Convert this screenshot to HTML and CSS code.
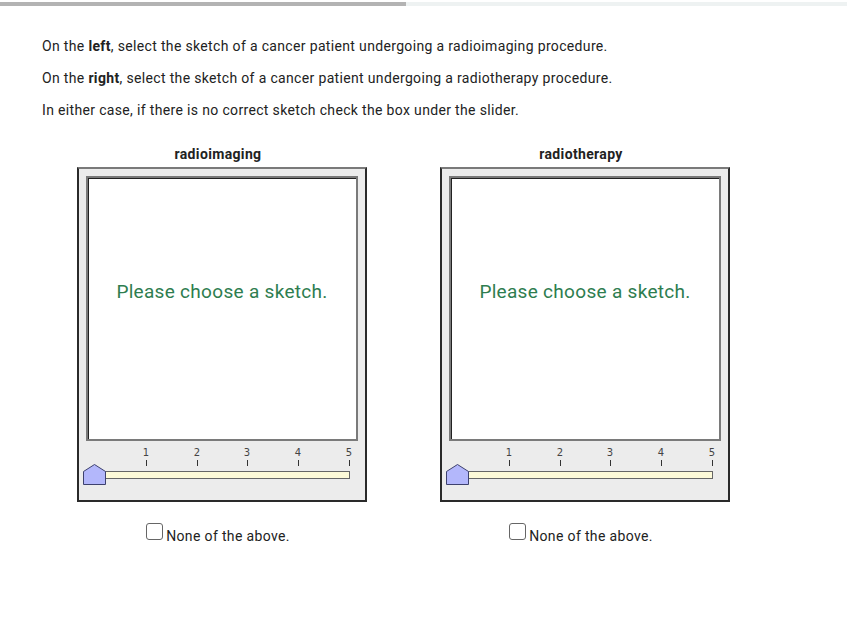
FILE: index.html
```html
<!DOCTYPE html>
<html lang="en">
<head>
    <meta charset="UTF-8">
    <meta name="viewport" content="width=device-width, initial-scale=1.0">
    <title>Sketch choice</title>
    <link rel="stylesheet" href="styles.css">
</head>
<body>
    <div class="progress">
        <div class="progressDone"></div>
    </div>

    <section class="istruzioni">
        <p>On the <b>left</b>, select the sketch of a cancer patient undergoing a radioimaging procedure.</p>
        <p>On the <b>right</b>, select the sketch of a cancer patient undergoing a radiotherapy procedure.</p>
        <p>In either case, if there is no correct sketch check the box under the slider.</p>
    </section>

    <main class="colonne">
        <div class="colonna">
            <h2 class="titolo">radioimaging</h2>
            <div class="pannello">
                <div class="schizzo">Please choose a sketch.</div>
                <svg class="slider" width="272" height="56" viewBox="0 0 272 56">
                    <g class="numeri">
                        <text x="63" y="15">1</text>
                        <text x="114" y="15">2</text>
                        <text x="164" y="15">3</text>
                        <text x="215" y="15">4</text>
                        <text x="266" y="15">5</text>
                    </g>
                    <g class="tacche">
                        <line x1="63.5" y1="19" x2="63.5" y2="25"/>
                        <line x1="114.5" y1="19" x2="114.5" y2="25"/>
                        <line x1="164.5" y1="19" x2="164.5" y2="25"/>
                        <line x1="215.5" y1="19" x2="215.5" y2="25"/>
                        <line x1="266.5" y1="19" x2="266.5" y2="25"/>
                    </g>
                    <rect class="binario" x="22.5" y="30.5" width="244" height="7"/>
                    <polygon class="cursore" points="0.5,43.5 0.5,30.5 11.5,23.5 22.5,30.5 22.5,43.5"/>
                </svg>
            </div>
            <label class="nessuno"><span class="casella"></span><span class="etichetta">None of the above.</span></label>
        </div>

        <div class="colonna">
            <h2 class="titolo">radiotherapy</h2>
            <div class="pannello">
                <div class="schizzo">Please choose a sketch.</div>
                <svg class="slider" width="272" height="56" viewBox="0 0 272 56">
                    <g class="numeri">
                        <text x="63" y="15">1</text>
                        <text x="114" y="15">2</text>
                        <text x="164" y="15">3</text>
                        <text x="215" y="15">4</text>
                        <text x="266" y="15">5</text>
                    </g>
                    <g class="tacche">
                        <line x1="63.5" y1="19" x2="63.5" y2="25"/>
                        <line x1="114.5" y1="19" x2="114.5" y2="25"/>
                        <line x1="164.5" y1="19" x2="164.5" y2="25"/>
                        <line x1="215.5" y1="19" x2="215.5" y2="25"/>
                        <line x1="266.5" y1="19" x2="266.5" y2="25"/>
                    </g>
                    <rect class="binario" x="22.5" y="30.5" width="244" height="7"/>
                    <polygon class="cursore" points="0.5,43.5 0.5,30.5 11.5,23.5 22.5,30.5 22.5,43.5"/>
                </svg>
            </div>
            <label class="nessuno"><span class="casella"></span><span class="etichetta">None of the above.</span></label>
        </div>
    </main>
</body>
</html>
```

FILE: styles.css
```css
body {
    margin: 0;
    font-family: Roboto, "Liberation Sans", sans-serif;
    color: #222;
    background: white;
}

.progress {
    margin-top: 2px;
    height: 4px;
    background-color: #eef2f2;
}

.progressDone {
    width: 406px;
    height: 100%;
    background-color: #b3b3b3;
}

.istruzioni {
    padding: 24px 0 0 42px;
    font-size: 14px;
    letter-spacing: 0.34px;
}

.istruzioni p {
    margin: 0;
    line-height: 32px;
}

.colonne {
    display: flex;
    gap: 73px;
    padding-left: 77px;
    margin-top: 19px;
}

.colonna {
    width: 290px;
}

.titolo {
    margin: 0 0 4px 0;
    padding-right: 8px;
    font-size: 14px;
    line-height: 18px;
    letter-spacing: 0.35px;
    text-align: center;
    color: #222;
}

.pannello {
    box-sizing: border-box;
    width: 290px;
    height: 335px;
    padding: 7px 7px 0 7px;
    background-color: #ececec;
    border: 2px solid #2a2a2a;
    border-top-color: #7a7a7a;
}

.schizzo {
    box-sizing: border-box;
    height: 265px;
    padding-top: 103px;
    background: white;
    border: 2px solid #7a7a7a;
    box-shadow: inset 1px 1px 0 #222;
    color: #2e7d4f;
    font-size: 19px;
    line-height: 22px;
    letter-spacing: 0.3px;
    text-align: center;
}

.slider {
    display: block;
    margin-left: -3px;
}

.numeri text {
    font-family: "DejaVu Sans", sans-serif;
    font-size: 10px;
    fill: #444;
    text-anchor: middle;
}

.tacche line {
    stroke: #333;
    stroke-width: 1;
}

.binario {
    fill: #fdfad8;
    stroke: #666;
    stroke-width: 1;
}

.cursore {
    fill: #b3b7fb;
    stroke: #3d416e;
    stroke-width: 1;
}

.nessuno {
    display: flex;
    align-items: flex-start;
    justify-content: center;
    padding-right: 8px;
    margin-top: 21px;
    font-size: 14px;
    line-height: 20px;
    letter-spacing: 0.35px;
}

.casella {
    box-sizing: border-box;
    width: 17px;
    height: 17px;
    margin-right: 3px;
    border: 1px solid #666;
    border-radius: 3px;
    background: white;
}

.etichetta {
    padding-top: 3px;
}
```
